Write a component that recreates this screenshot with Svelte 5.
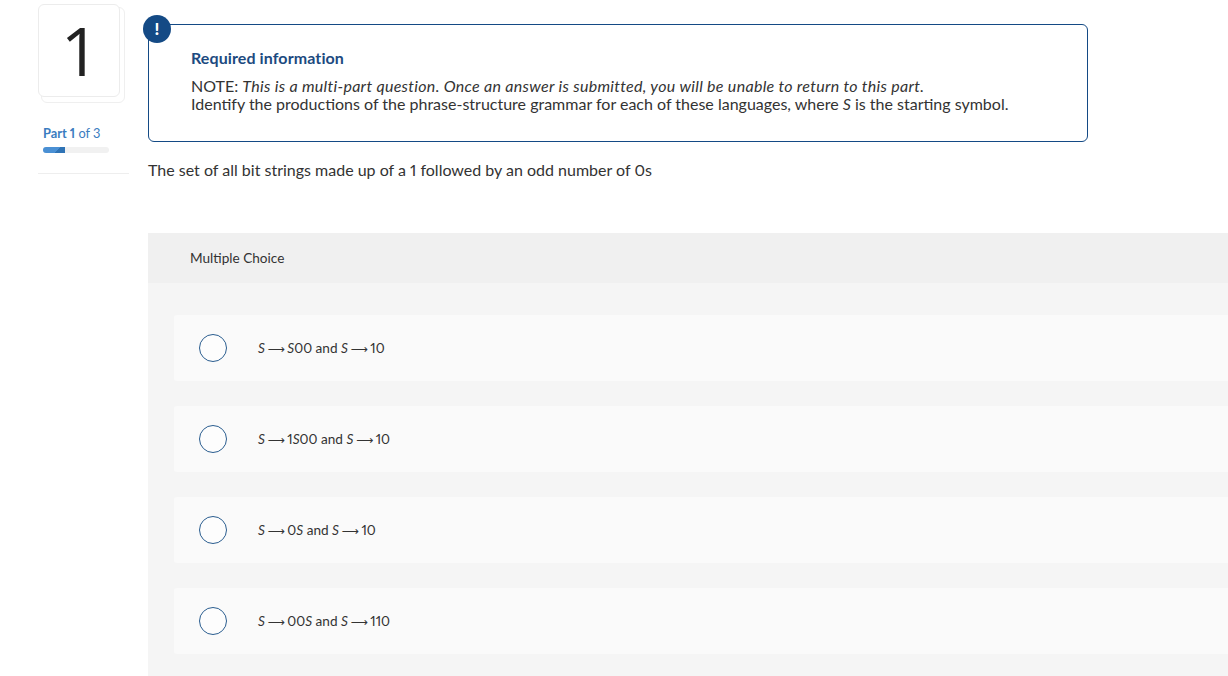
<script lang="ts">
	const choices = [
		{ id: "a", first: "", second: "00", rhs: "10" },
		{ id: "b", first: "1", second: "00", rhs: "10" },
		{ id: "c", first: "0", second: "", rhs: "10" },
		{ id: "d", first: "00", second: "", rhs: "110" }
	];
</script>

<div class="page">
	<aside class="side">
		<div class="card-stack">
			<div class="card">1</div>
		</div>
		<p class="part"><b>Part 1</b> of 3</p>
		<div class="progress"><span class="progress-fill"></span></div>
		<hr class="rule" />
	</aside>

	<main class="main">
		<section class="notice">
			<span class="badge">!</span>
			<h2>Required information</h2>
			<p>
				NOTE: <em class="note">This is a multi-part question. Once an answer is submitted, you will be unable to return to this part.</em><br />
				Identify the productions of the phrase-structure grammar for each of these languages, where <em>S</em> is the starting symbol.
			</p>
		</section>

		<p class="prompt">The set of all bit strings made up of a 1 followed by an odd number of 0s</p>

		<section class="panel">
			<header class="panel-head">Multiple Choice</header>
			<div class="panel-body">
				{#each choices as c (c.id)}
					<div class="choice">
						<span class="radio"></span>
						<span class="formula">
							<i>S</i><span class="arrow">⟶</span>{c.first}<i>S</i>{c.second} and <i>S</i><span class="arrow">⟶</span>{c.rhs}
						</span>
					</div>
				{/each}
			</div>
		</section>
	</main>
</div>

<style>
	:global(body) {
		margin: 0;
		background: #fff;
		overflow: hidden;
	}

	.page {
		display: flex;
		align-items: flex-start;
		gap: 19px;
		height: 676px;
		overflow: hidden;
		padding-left: 38px;
		font-family: Lato, "Liberation Sans", sans-serif;
		font-variant-numeric: proportional-nums;
		color: #333;
	}

	.side {
		flex: 0 0 91px;
		padding-top: 4px;
	}

	.card-stack {
		width: 82px;
		height: 93px;
		position: relative;
	}

	.card-stack::before {
		content: "";
		position: absolute;
		left: 3px;
		top: 3px;
		width: 84px;
		height: 96px;
		box-sizing: border-box;
		border: 1px solid #efefef;
		border-radius: 6px;
		background: #fff;
	}

	.card {
		position: relative;
		box-sizing: border-box;
		width: 82px;
		height: 93px;
		padding-left: 2px;
		border: 1px solid #ececec;
		border-radius: 6px;
		background: #fff;
		font-family: "Open Sans", sans-serif;
		font-size: 68px;
		font-weight: 500;
		line-height: 89px;
		text-align: center;
		color: #222;
	}

	.part {
		margin: 28px 0 0 5px;
		font-size: 12.8px;
		line-height: 16px;
		color: #3a7cc0;
	}

	.part b {
		font-weight: 700;
	}

	.progress {
		width: 66px;
		height: 6px;
		margin: 6px 0 0 5px;
		border-radius: 3px;
		background: #f1f1f1;
		overflow: hidden;
	}

	.progress-fill {
		display: block;
		width: 22px;
		height: 6px;
		background: linear-gradient(135deg, #4a90d4 0 62%, #2f73b5 62%);
	}

	.rule {
		margin: 20px 0 0;
		border: 0;
		border-top: 1px solid #eeeeee;
	}

	.main {
		flex: 1;
		min-width: 0;
		padding-top: 24px;
	}

	.notice {
		position: relative;
		box-sizing: border-box;
		width: 940px;
		height: 118px;
		padding: 24px 42px 0;
		border: 1px solid #144a85;
		border-radius: 6px;
	}

	.badge {
		position: absolute;
		left: -6px;
		top: -10px;
		width: 28px;
		height: 28px;
		border-radius: 50%;
		background: #144a85;
		color: #fff;
		font-size: 17px;
		font-weight: 900;
		line-height: 28px;
		text-align: center;
	}

	.notice h2 {
		margin: 0;
		font-size: 16px;
		line-height: 18px;
		font-weight: 700;
		letter-spacing: 0.1px;
		color: #1c4a80;
	}

	.notice p {
		margin: 10px 0 0;
		font-size: 16px;
		line-height: 18px;
	}

	.note {
		letter-spacing: 0.3px;
	}

	.prompt {
		margin: 19px 0 0;
		font-size: 16px;
		line-height: 18px;
	}

	.panel {
		margin-top: 54px;
		border-radius: 3px 0 0 0;
		background: #f5f5f5;
		padding-bottom: 40px;
	}

	.panel-head {
		height: 50px;
		padding-left: 42px;
		background: #f0f0f0;
		font-size: 13.6px;
		line-height: 50px;
	}

	.panel-body {
		display: flex;
		flex-direction: column;
		gap: 25px;
		padding: 32px 0 0 26px;
	}

	.choice {
		display: flex;
		align-items: center;
		gap: 31px;
		height: 66px;
		padding-left: 25px;
		border-radius: 3px 0 0 3px;
		background: #fafafa;
	}

	.radio {
		box-sizing: border-box;
		width: 28px;
		height: 28px;
		border: 1.5px solid #2a5d8f;
		border-radius: 50%;
		background: #fdfdfd;
	}

	.formula {
		font-size: 13.6px;
	}

	.arrow {
		margin: 0 2.6px;
		font-family: "DejaVu Sans", sans-serif;
		font-size: 12px;
	}
</style>
